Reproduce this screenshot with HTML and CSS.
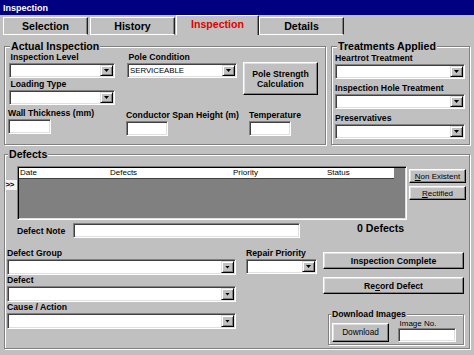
FILE: index.html
```html
<!DOCTYPE html>
<html>
<head>
<meta charset="utf-8">
<link rel="stylesheet" href="styles.css">
</head>
<body>
<div class="titlebar">Inspection</div>
<div class="tabs">
  <div class="tab">Selection</div>
  <div class="tab">History</div>
  <div class="tab sel">Inspection</div>
  <div class="tab">Details</div>
</div>

<div class="toprow">
  <div class="frame f-actual">
    <div class="cap">Actual Inspection</div>
    <div class="ai-top">
      <div class="col1">
        <div class="field">
          <div class="lbl pl">Inspection Level</div>
          <div class="combo"><span class="val"></span><span class="dd"></span></div>
        </div>
        <div class="field mt1">
          <div class="lbl pl">Loading Type</div>
          <div class="combo"><span class="val"></span><span class="dd"></span></div>
        </div>
      </div>
      <div class="col2">
        <div class="field">
          <div class="lbl pl">Pole Condition</div>
          <div class="combo"><span class="val">SERVICEABLE</span><span class="dd"></span></div>
        </div>
      </div>
      <div class="btn pole">Pole Strength<br>Calculation</div>
    </div>
    <div class="ai-bottom">
      <div class="field f-wall">
        <div class="lbl">Wall Thickness (mm)</div>
        <div class="txt w43"></div>
      </div>
      <div class="field f-cond">
        <div class="lbl">Conductor Span Height (m)</div>
        <div class="txt w42"></div>
      </div>
      <div class="field f-temp">
        <div class="lbl">Temperature</div>
        <div class="txt w42"></div>
      </div>
    </div>
  </div>

  <div class="frame f-treat">
    <div class="cap">Treatments Applied</div>
    <div class="field mt1">
      <div class="lbl">Heartrot Treatment</div>
      <div class="combo"><span class="val"></span><span class="dd"></span></div>
    </div>
    <div class="field mt4">
      <div class="lbl">Inspection Hole Treatment</div>
      <div class="combo"><span class="val"></span><span class="dd"></span></div>
    </div>
    <div class="field mt4">
      <div class="lbl">Preservatives</div>
      <div class="combo"><span class="val"></span><span class="dd"></span></div>
    </div>
  </div>
</div>

<div class="frame f-defects">
  <div class="cap cap-def">Defects</div>
  <div class="gridrow">
    <div class="indcol"><div class="ind">&gt;&gt;</div></div>
    <div class="grid">
      <div class="ghead">
        <div class="gc c1">Date</div>
        <div class="gc c2">Defects</div>
        <div class="gc c3">Priority</div>
        <div class="gc c4">Status</div>
      </div>
    </div>
    <div class="gbtns">
      <div class="btn sbtn"><span><u>N</u>on Existent</span></div>
      <div class="btn sbtn"><span><u>R</u>ectified</span></div>
    </div>
  </div>
  <div class="noterow">
    <div class="lbl notelbl">Defect Note</div>
    <div class="txt note"></div>
    <div class="count">0 Defects</div>
  </div>
  <div class="lower">
    <div class="lcol">
      <div class="field">
        <div class="lbl">Defect Group</div>
        <div class="combo tall"><span class="val"></span><span class="dd"></span></div>
      </div>
      <div class="field">
        <div class="lbl">Defect</div>
        <div class="combo tall"><span class="val"></span><span class="dd"></span></div>
      </div>
      <div class="field">
        <div class="lbl">Cause / Action</div>
        <div class="combo tall"><span class="val"></span><span class="dd"></span></div>
      </div>
    </div>
    <div class="field rp">
      <div class="lbl">Repair Priority</div>
      <div class="combo"><span class="val"></span><span class="dd"></span></div>
    </div>
    <div class="rcol">
      <div class="btn bigbtn b-ic">Inspection Complete</div>
      <div class="btn bigbtn b-rd"><span>Re<u>c</u>ord Defect</span></div>
      <div class="frame dl">
        <div class="cap cap-dl">Download Images</div>
        <div class="dlrow">
          <div class="btn dlbtn">Download</div>
          <div class="field imgf">
            <div class="lbl2">Image No.</div>
            <div class="txt imgno"></div>
          </div>
        </div>
      </div>
    </div>
  </div>
</div>
</body>
</html>
```

FILE: styles.css
```css
* { box-sizing: border-box; }
html, body { margin: 0; padding: 0; }
body {
  width: 474px;
  height: 355px;
  overflow: hidden;
  background: #c0c0c0;
  font-family: "Liberation Sans", Arial, sans-serif;
  color: #000;
}

.titlebar {
  height: 15px;
  background: #000080;
  color: #fff;
  font-weight: bold;
  font-size: 9px;
  line-height: 16px;
  padding-left: 3px;
  overflow: hidden;
}

.tabs {
  display: flex;
  align-items: flex-end;
  height: 20px;
  padding-left: 3px;
}
.tab {
  width: 85px;
  height: 18px;
  border: 1px solid;
  border-color: #fff #202020 #fff #fff;
  box-shadow: inset -1px 0 #808080;
  font-weight: bold;
  font-size: 10.6px;
  line-height: 16px;
  text-align: center;
  white-space: nowrap;
}
.tab + .tab { margin-left: 2px; }
.tab.sel {
  width: 83px;
  height: 20px;
  margin-left: 1px;
  border-bottom: 0;
  color: #e00000;
}
.tab.sel + .tab { margin-left: 0; }

.toprow {
  display: flex;
  margin-top: 11px;
  padding-left: 4px;
}

.frame {
  border: 1px solid #808080;
  box-shadow: inset 1px 1px #fff, 1px 1px #fff;
  display: flex;
  flex-direction: column;
}
.cap {
  align-self: flex-start;
  background: #c0c0c0;
  margin: -7px 0 0 2px;
  padding: 0 1px;
  font-size: 10.6px;
  font-weight: bold;
  line-height: 12px;
  height: 12px;
  white-space: nowrap;
}

.f-actual {
  width: 322px;
  height: 99px;
  padding-left: 3px;
}
.f-treat {
  width: 139px;
  height: 99px;
  margin-left: 5px;
  padding: 0 4px 0 3px;
}

.field { display: flex; flex-direction: column; }
.mt1 { margin-top: 1px; }
.mt4 { margin-top: 4px; }

.lbl {
  font-size: 8.7px;
  font-weight: bold;
  line-height: 10px;
  height: 10px;
  white-space: nowrap;
}
.lbl.pl { padding-left: 1.5px; }

.combo {
  margin-top: 1px;
  height: 15px;
  display: flex;
  background: #fff;
  border: 1px solid;
  border-color: #808080 #fff #fff #808080;
  box-shadow: inset 1px 1px #404040, inset -1px -1px #dfdfdf;
  padding: 1px;
}
.combo.tall { height: 16px; }
.combo .val {
  flex: 1;
  font-size: 7.8px;
  line-height: 11px;
  padding-left: 1px;
  white-space: nowrap;
  overflow: hidden;
}
.dd {
  width: 13px;
  background: #c0c0c0;
  border: 1px solid;
  border-color: #dfdfdf #000 #000 #dfdfdf;
  box-shadow: inset 1px 1px #fff, inset -1px -1px #808080;
  display: flex;
  align-items: center;
  justify-content: center;
}
.dd::after {
  content: "";
  width: 5px;
  height: 3px;
  background: #000;
  clip-path: polygon(0 0, 100% 0, 50% 100%);
}

.txt {
  margin-top: 1px;
  height: 15px;
  background: #fff;
  border: 1px solid;
  border-color: #808080 #fff #fff #808080;
  box-shadow: inset 1px 1px #404040, inset -1px -1px #dfdfdf;
}
.w43 { width: 43px; }
.w42 { width: 42px; }

.btn {
  background: #c0c0c0;
  border: 1px solid;
  border-color: #fff #000 #000 #fff;
  box-shadow: inset -1px -1px #808080, inset 1px 1px #dfdfdf;
  display: flex;
  align-items: center;
  justify-content: center;
  text-align: center;
  white-space: nowrap;
}

.ai-top { display: flex; align-items: flex-start; }
.col1 { width: 106px; margin-left: 1px; display: flex; flex-direction: column; }
.col2 { width: 110px; margin-left: 12px; }
.pole {
  margin-left: 6px;
  margin-top: 10px;
  width: 75px;
  height: 33px;
  font-size: 8.7px;
  font-weight: bold;
  line-height: 10px;
}

.ai-bottom { display: flex; align-items: flex-start; margin-top: 3px; }
.f-wall { width: 118px; }
.f-cond { width: 123px; margin-top: 2px; }
.f-temp { margin-top: 2px; }

.f-defects {
  margin: 9px 0 0 4px;
  width: 466px;
  height: 195px;
}
.cap-def { margin-left: 3px; }

.gridrow { display: flex; align-items: flex-start; margin-top: 6px; }
.indcol { width: 12px; }
.ind {
  margin-top: 14px;
  height: 10px;
  background: #f2f2f2;
  font-size: 8px;
  font-weight: bold;
  line-height: 10px;
  padding-left: 0.5px;
  letter-spacing: -0.5px;
}
.grid {
  width: 390px;
  height: 54px;
  background: #808080;
  border: 1px solid;
  border-color: #808080 #fff #fff #808080;
  box-shadow: inset 1px 1px #000, inset -1px -1px #dfdfdf;
  padding: 1px;
}
.ghead { display: flex; }
.gc {
  background: #fff;
  height: 11px;
  border-bottom: 1px solid #404040;
  font-size: 8px;
  line-height: 10px;
  padding-left: 1px;
  white-space: nowrap;
}
.c1 { width: 90px; }
.c2 { width: 123px; }
.c3 { width: 94px; }
.c4 { width: 68px; }

.gbtns { margin-left: 2px; width: 57px; display: flex; flex-direction: column; }
.sbtn { height: 14px; margin-top: 3px; font-size: 8px; }

.noterow {
  display: flex;
  align-items: center;
  margin-top: 3px;
  padding-left: 12px;
  height: 15px;
}
.notelbl { width: 56px; }
.note { width: 227px; margin-top: 0; }
.count {
  align-self: flex-start;
  margin: -1px 0 0 57px;
  font-size: 10.6px;
  font-weight: bold;
  line-height: 12px;
  white-space: nowrap;
}

.lower { display: flex; align-items: flex-start; margin-top: 10px; padding-left: 2px; }
.lcol { width: 229px; display: flex; flex-direction: column; }
.rp { margin-left: 10px; width: 71px; }
.rcol { margin-left: 6px; width: 141px; display: flex; flex-direction: column; }
.bigbtn { height: 17px; font-size: 8.7px; font-weight: bold; }
.b-ic { margin-top: 4px; }
.b-rd { margin-top: 8px; }

.dl { margin: 20px 0 0 5px; width: 136px; height: 31px; }
.cap-dl {
  margin: -6px 0 0 2px;
  font-size: 8.7px;
  line-height: 10px;
  height: 10px;
}
.dlrow { display: flex; align-items: flex-start; padding-left: 3px; }
.dlbtn { margin-top: 4px; width: 57px; height: 19px; font-size: 8.25px; }
.imgf { margin-left: 9px; }
.lbl2 {
  font-size: 8px;
  line-height: 9px;
  height: 9px;
  padding-left: 1.5px;
  white-space: nowrap;
}
.imgno { width: 58px; height: 14px; margin-top: 0; }
```
